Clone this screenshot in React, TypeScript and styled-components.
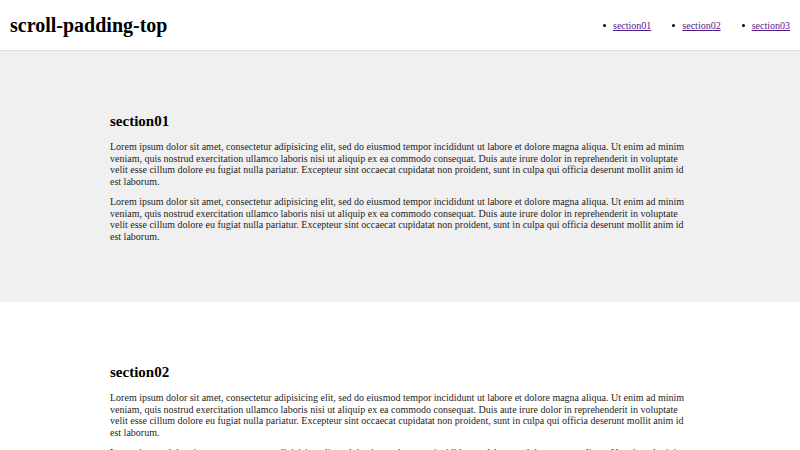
import React from "react";
import styled, { createGlobalStyle } from "styled-components";

const Global = createGlobalStyle`
  html, body {
    margin: 0;
    padding: 0;
    background: #fff;
    font-family: "Liberation Serif", "Times New Roman", serif;
    color: #000;
  }
`;

const Header = styled.header`
  height: 50px;
  border-bottom: 1px solid #dddddd;
  background: #fff;
  display: flex;
  align-items: center;
  justify-content: space-between;
  padding: 0 10px;
`;

const Title = styled.h1`
  margin: 0;
  font-size: 20px;
  font-weight: bold;
`;

const NavList = styled.ul`
  margin: 0;
  padding: 0;
  display: flex;
  gap: 21px;
  list-style: none;
  font-size: 10px;
`;

/* small round bullet drawn before each link */
const NavItem = styled.li`
  display: flex;
  align-items: center;
  gap: 7px;
  &::before {
    content: "";
    width: 3px;
    height: 3px;
    border-radius: 50%;
    background: #000;
  }
`;

const NavLink = styled.a`
  color: #551a8b;
  text-decoration: underline;
`;

const Section = styled.section<{ $tone: "gray" | "white" }>`
  background: ${(p) => (p.$tone === "gray" ? "#f0f0f0" : "#ffffff")};
  padding: 62px 0 60px;
`;

const Inner = styled.div`
  width: 580px;
  margin: 0 auto;
`;

const Heading = styled.h2`
  margin: 0 0 11px;
  font-size: 15px;
  line-height: 17px;
  font-weight: bold;
`;

const Para = styled.p`
  margin: 0 0 9px;
  font-size: 10px;
  line-height: 11.5px;
  color: #1e1e1e;
  &:last-child {
    margin-bottom: 0;
  }
`;

const LOREM =
  "Lorem ipsum dolor sit amet, consectetur adipisicing elit, sed do eiusmod tempor incididunt ut labore et dolore magna aliqua. Ut enim ad minim veniam, quis nostrud exercitation ullamco laboris nisi ut aliquip ex ea commodo consequat. Duis aute irure dolor in reprehenderit in voluptate velit esse cillum dolore eu fugiat nulla pariatur. Excepteur sint occaecat cupidatat non proident, sunt in culpa qui officia deserunt mollit anim id est laborum.";

const sections = [
  { id: "section01", tone: "gray" as const },
  { id: "section02", tone: "white" as const },
  { id: "section03", tone: "gray" as const },
];

export default function App() {
  return (
    <>
      <Global />
      <Header>
        <Title>scroll-padding-top</Title>
        <nav>
          <NavList>
            {sections.map((s) => (
              <NavItem key={s.id}>
                <NavLink href={`#${s.id}`}>{s.id}</NavLink>
              </NavItem>
            ))}
          </NavList>
        </nav>
      </Header>
      <main>
        {sections.map((s) => (
          <Section key={s.id} id={s.id} $tone={s.tone}>
            <Inner>
              <Heading>{s.id}</Heading>
              <Para>{LOREM}</Para>
              <Para>{LOREM}</Para>
            </Inner>
          </Section>
        ))}
      </main>
    </>
  );
}
